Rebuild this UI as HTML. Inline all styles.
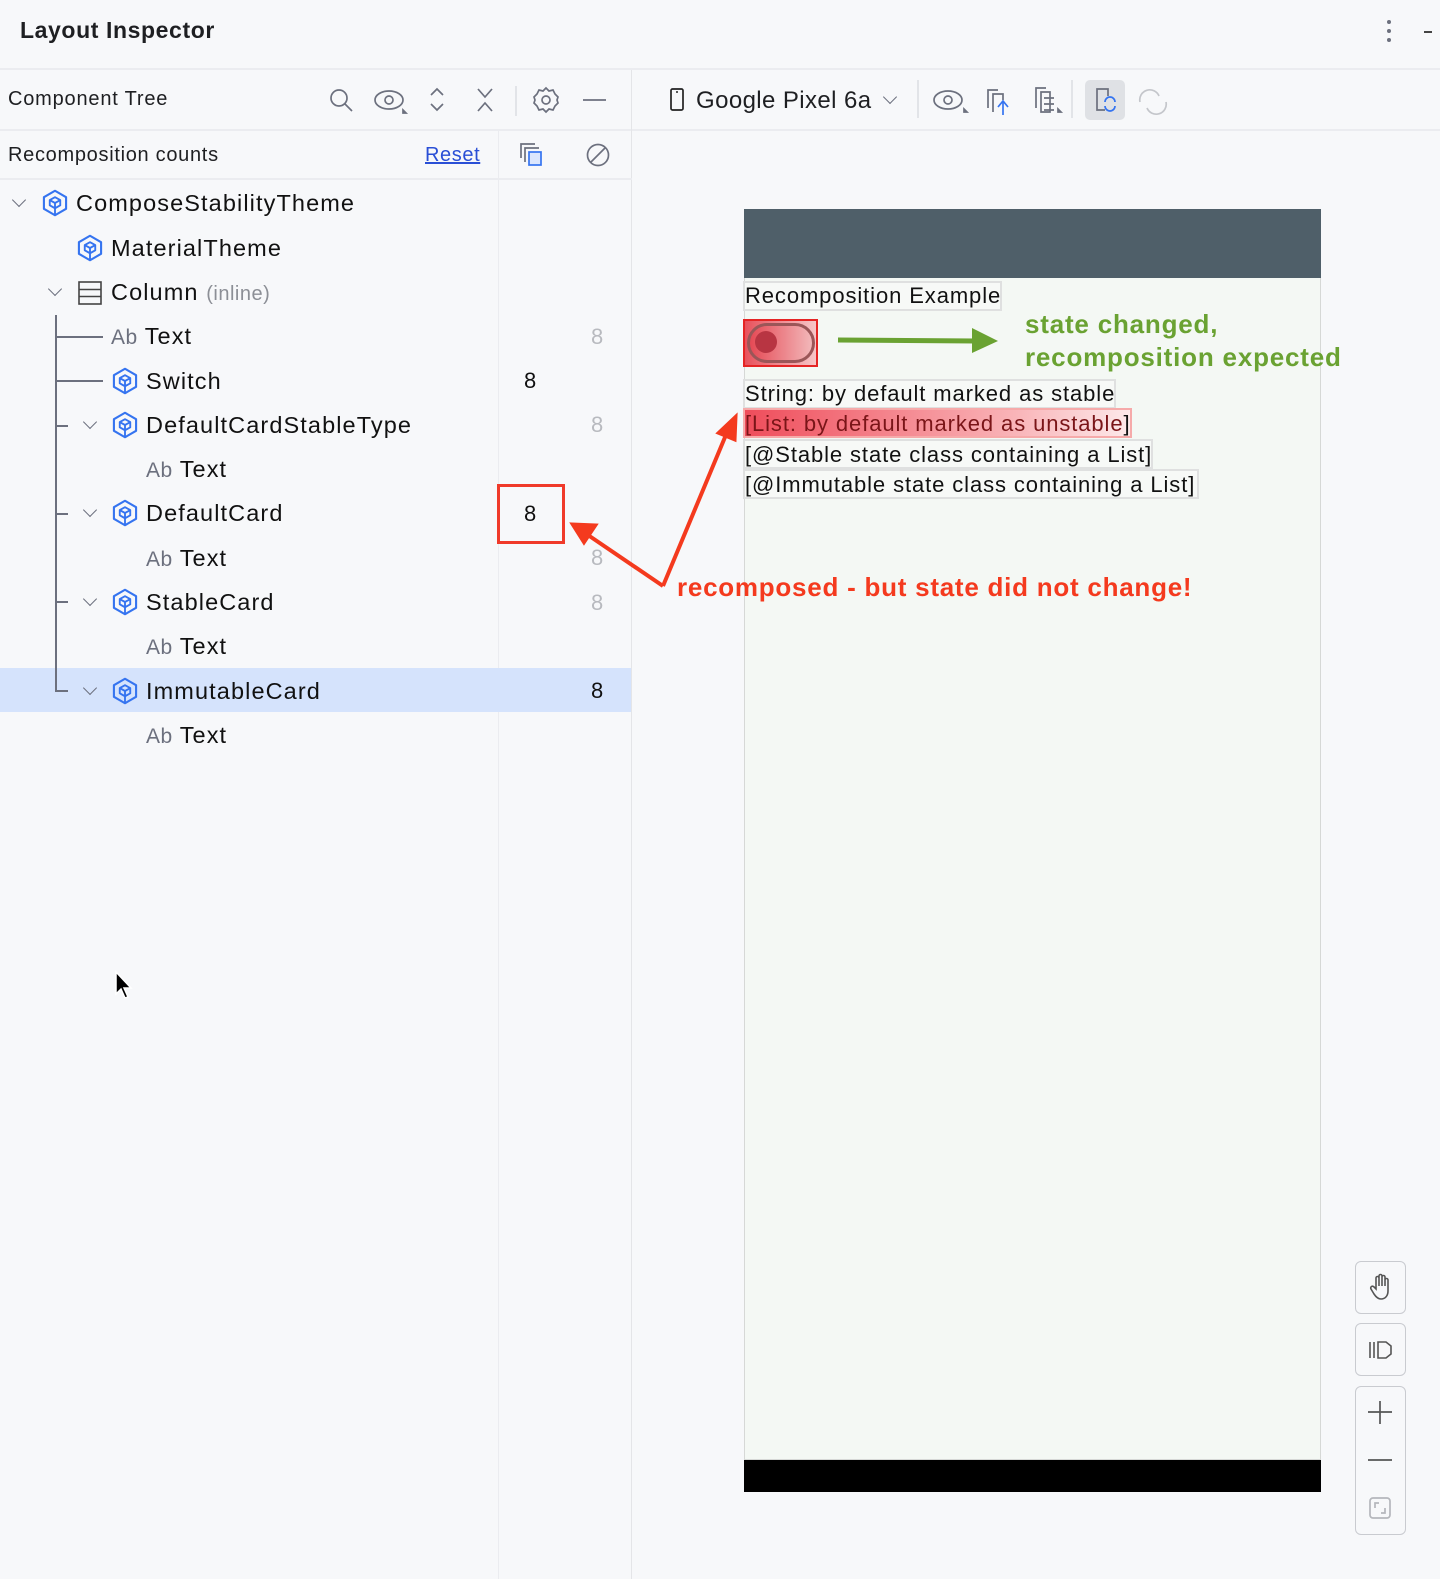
<!DOCTYPE html>
<html><head><meta charset="utf-8"><style>
*{margin:0;padding:0;box-sizing:border-box}
body{width:1440px;height:1579px;background:#f7f8fa;font-family:"Liberation Sans",sans-serif;position:relative;overflow:hidden;color:#111}
.a{position:absolute;white-space:nowrap}
.hl{position:absolute;height:2px;background:#ebecf0}
.vl{position:absolute;width:1px;background:#ebecf0}
.t{font-size:23.5px;line-height:30px;letter-spacing:1.1px}
.ab{color:#6c707e;font-size:21px;margin-right:7px;letter-spacing:0.5px}
.c8{position:absolute;font-size:22px;color:#b8babf}
.tree{position:absolute;background:#6c707e}
.chev{position:absolute;width:10px;height:10px;border-right:1.6px solid #6c707e;border-bottom:1.6px solid #6c707e;transform:rotate(45deg)}
.dev{font-size:22px;line-height:28px;letter-spacing:0.9px}
.box{position:absolute;border:2px solid #dfe0e0;background:#f7f9f7}
.btn{position:absolute;left:1355px;width:51px;border:1.5px solid #c9cbd0;border-radius:6px;background:#f7f8fa}
</style></head><body>
<svg width="0" height="0" style="position:absolute"><defs>
<symbol id="cube" viewBox="0 0 24 24"><path d="M12 1.5 L21.5 7 L21.5 17 L12 22.5 L2.5 17 L2.5 7 Z" fill="none" stroke="#3574f0" stroke-width="1.8" stroke-linejoin="round"/><path d="M7.5 9.5 L12 7 L16.5 9.5 L16.5 14 L12 16.5 L7.5 14 Z M7.5 9.5 L12 12 L16.5 9.5 M12 12 L12 22" fill="none" stroke="#3574f0" stroke-width="1.6" stroke-linejoin="round"/></symbol>
</defs></svg>

<!-- title -->
<div class="a" style="left:20px;top:17px;font-size:23px;font-weight:bold;color:#1e1f22;letter-spacing:0.6px">Layout Inspector</div>
<div class="a" style="left:1387px;top:20px;width:4px;height:4px;border-radius:2px;background:#6c707e;box-shadow:0 9px 0 #6c707e,0 18px 0 #6c707e"></div>
<div class="a" style="left:1424px;top:31px;width:8px;height:1.5px;background:#444"></div>
<div class="hl" style="left:0;top:68px;width:1440px"></div>

<!-- left toolbar -->
<div class="a" style="left:8px;top:88px;font-size:20px;color:#1e1f22;letter-spacing:0.8px">Component Tree</div>
<svg class="a" style="left:326px;top:86px" width="300" height="30" fill="none" stroke="#6c707e" stroke-width="1.7">
<circle cx="13" cy="12" r="8"/><path d="M19 18 L26 25"/>
<ellipse cx="63" cy="14" rx="14" ry="9"/><circle cx="63" cy="14" r="4"/><path d="M77 24 L80 27 L77 27Z" fill="#6c707e"/>
<path d="M105 9 L111 3 L117 9 M105 18 L111 24 L117 18"/>
<path d="M152 3 L159 11 L166 3 M152 25 L159 17 L166 25"/>
<path d="M190 -4 L190 32" stroke="#dfe1e5"/>
<circle cx="220" cy="14" r="4"/><path d="M220 2 L223 5 L227 4 L229 8 L232 11 L231 14 L232 17 L229 20 L227 24 L223 23 L220 26 L217 23 L213 24 L211 20 L208 17 L209 14 L208 11 L211 8 L213 4 L217 5 Z"/>
<path d="M257 14 L280 14"/>
</svg>
<div class="hl" style="left:0;top:129px;width:1440px"></div>
<div class="vl" style="left:631px;top:70px;height:1509px;background:#e4e5e8"></div>

<!-- recomposition row -->
<div class="a" style="left:8px;top:144px;font-size:20px;color:#1e1f22;letter-spacing:0.7px">Recomposition counts</div>
<div class="a" style="left:425px;top:144px;font-size:20px;color:#2a4fd6;text-decoration:underline;letter-spacing:0.6px">Reset</div>
<svg class="a" style="left:518px;top:141px" width="100" height="30" fill="none" stroke-width="1.7">
<path d="M3 17 L3 3 L17 3" stroke="#6c707e"/><path d="M7 21 L7 7 L21 7" stroke="#6c707e"/><rect x="11" y="11" width="12" height="13" fill="#dbe6fd" stroke="#3574f0"/>
<circle cx="80" cy="14" r="10.5" stroke="#6c707e"/><path d="M73 21 L87 7" stroke="#6c707e"/>
</svg>
<div class="hl" style="left:0;top:178px;width:632px"></div>
<div class="vl" style="left:498px;top:130px;height:1449px"></div>

<!-- selected row -->
<div class="a" style="left:0;top:668px;width:631px;height:44px;background:#d5e3fc"></div>

<!-- tree lines -->
<div class="tree" style="left:55px;top:315px;width:1.5px;height:375px"></div>
<div class="tree" style="left:55px;top:336px;width:48px;height:1.5px"></div>
<div class="tree" style="left:55px;top:380px;width:48px;height:1.5px"></div>
<div class="tree" style="left:55px;top:425px;width:13px;height:1.5px"></div>
<div class="tree" style="left:55px;top:513px;width:13px;height:1.5px"></div>
<div class="tree" style="left:55px;top:601px;width:13px;height:1.5px"></div>
<div class="tree" style="left:55px;top:690px;width:13px;height:1.5px"></div>

<div class="chev" style="left:14px;top:195px"></div>
<div class="chev" style="left:50px;top:284px"></div>
<div class="chev" style="left:85px;top:417px"></div>
<div class="chev" style="left:85px;top:505px"></div>
<div class="chev" style="left:85px;top:594px"></div>
<div class="chev" style="left:85px;top:683px"></div>

<svg class="a" style="left:41px;top:189px" width="28" height="28"><use href="#cube"/></svg>
<div class="a t" style="left:76px;top:188px">ComposeStabilityTheme</div>
<svg class="a" style="left:76px;top:234px" width="28" height="28"><use href="#cube"/></svg>
<div class="a t" style="left:111px;top:233px">MaterialTheme</div>
<svg class="a" style="left:77px;top:280px" width="26" height="26"><rect x="2" y="2" width="22" height="22" fill="none" stroke="#444" stroke-width="1.6"/><path d="M2 9.5 H24 M2 16.5 H24" stroke="#444" stroke-width="1.6"/></svg>
<div class="a t" style="left:111px;top:277px">Column <span style="color:#8c8f96;font-size:20px;letter-spacing:0.5px">(inline)</span></div>
<div class="a t" style="left:111px;top:321px"><span class="ab">Ab</span>Text</div>
<svg class="a" style="left:111px;top:367px" width="28" height="28"><use href="#cube"/></svg>
<div class="a t" style="left:146px;top:366px">Switch</div>
<svg class="a" style="left:111px;top:411px" width="28" height="28"><use href="#cube"/></svg>
<div class="a t" style="left:146px;top:410px">DefaultCardStableType</div>
<div class="a t" style="left:146px;top:454px"><span class="ab">Ab</span>Text</div>
<svg class="a" style="left:111px;top:499px" width="28" height="28"><use href="#cube"/></svg>
<div class="a t" style="left:146px;top:498px">DefaultCard</div>
<div class="a t" style="left:146px;top:543px"><span class="ab">Ab</span>Text</div>
<svg class="a" style="left:111px;top:588px" width="28" height="28"><use href="#cube"/></svg>
<div class="a t" style="left:146px;top:587px">StableCard</div>
<div class="a t" style="left:146px;top:631px"><span class="ab">Ab</span>Text</div>
<svg class="a" style="left:111px;top:677px" width="28" height="28"><use href="#cube"/></svg>
<div class="a t" style="left:146px;top:676px">ImmutableCard</div>
<div class="a t" style="left:146px;top:720px"><span class="ab">Ab</span>Text</div>

<!-- counts -->
<div class="c8" style="left:591px;top:324px">8</div>
<div class="c8" style="left:524px;top:368px;color:#111">8</div>
<div class="c8" style="left:591px;top:412px">8</div>
<div class="c8" style="left:524px;top:501px;color:#111">8</div>
<div class="c8" style="left:591px;top:545px">8</div>
<div class="c8" style="left:591px;top:590px">8</div>
<div class="c8" style="left:591px;top:678px;color:#111">8</div>
<div class="a" style="left:497px;top:484px;width:68px;height:60px;border:3px solid #f03a2a"></div>

<!-- cursor -->
<svg class="a" style="left:114px;top:970px" width="24" height="34"><path d="M2 2 L2 24 L7 19 L11 28 L14 27 L10 18 L17 18 Z" fill="#000" stroke="#fff" stroke-width="1.5"/></svg>

<!-- right toolbar -->
<svg class="a" style="left:668px;top:87px" width="20" height="26"><rect x="3" y="2" width="12" height="21" rx="1.5" fill="none" stroke="#222" stroke-width="1.7"/><path d="M8 5 H10" stroke="#222" stroke-width="1.5"/></svg>
<div class="a" style="left:696px;top:87px;font-size:24px;color:#1e1f22;letter-spacing:0.4px">Google Pixel 6a</div>
<div class="chev" style="left:885px;top:92px"></div>
<svg class="a" style="left:915px;top:80px" width="260" height="42" fill="none" stroke="#6c707e" stroke-width="1.7">
<path d="M3 0 V38" stroke="#dfe1e5"/>
<ellipse cx="33" cy="20" rx="14" ry="9"/><circle cx="33" cy="20" r="4"/><path d="M49 29 L52 32 L49 32Z" fill="#6c707e"/>
<path d="M73 28 V10 H83 M78 32 V14 H88 V20"/><path d="M88 35 V22 M83 27 L88 21 L93 27" stroke="#3574f0"/>
<path d="M121 28 V8 H131 M126 32 V12 H135 V32 Z M129 18 H139 M129 24 H139 M129 30 H139"/><path d="M143 29 L146 32 L143 32Z" fill="#6c707e"/>
<path d="M157 0 V38" stroke="#dfe1e5"/>
<rect x="170" y="0" width="40" height="40" rx="5" fill="#dfe1e5" stroke="none"/>
<path d="M190 30 H182 V9 H193 V16"/><path d="M190 22 A5 5 0 0 1 200 22 M200 26 A5 5 0 0 1 190 26" stroke="#3574f0"/>
<path d="M225 22 A10 10 0 0 1 244 16 M251 22 A10 10 0 0 1 232 28" stroke="#c4c6cb"/>
</svg>

<!-- device -->
<div class="a" style="left:744px;top:209px;width:577px;height:69px;background:#4f5f69"></div>
<div class="a" style="left:744px;top:278px;width:577px;height:1182px;background:#f4f8f4;border:1.5px solid #d6d8d6;border-top:none"></div>
<div class="a" style="left:744px;top:1460px;width:577px;height:32px;background:#000"></div>
<div class="box" style="left:743px;top:281px;width:259px;height:30px"></div>
<div class="a dev" style="left:745px;top:282px">Recomposition Example</div>
<div class="a" style="left:743px;top:319px;width:75px;height:48px;border:2px solid #e52424;background:linear-gradient(90deg,#e8525c,#f7c6c8)"></div>
<div class="a" style="left:747px;top:323px;width:68px;height:40px;border-radius:20px;border:3px solid #9b5658;background:linear-gradient(90deg,#e54a55,#f2b7b9)"></div>
<div class="a" style="left:755px;top:331px;width:22px;height:22px;border-radius:11px;background:#b83542"></div>
<div class="box" style="left:743px;top:379px;width:373px;height:30px"></div>
<div class="a dev" style="left:745px;top:380px">String: by default marked as stable</div>
<div class="a" style="left:743px;top:408px;width:389px;height:30px;border:2px solid #f6aaaa;background:linear-gradient(90deg,#ef4d5b,#f9b4b8 70%,#fde9ea)"></div>
<div class="a dev" style="left:745px;top:410px;color:#7a1518">[List: by default marked as unstable<span style="color:#111">]</span></div>
<div class="box" style="left:743px;top:439px;width:410px;height:30px"></div>
<div class="a dev" style="left:745px;top:441px">[@Stable state class containing a List]</div>
<div class="box" style="left:743px;top:469px;width:456px;height:30px"></div>
<div class="a dev" style="left:745px;top:471px">[@Immutable state class containing a List]</div>

<!-- annotations -->
<svg class="a" style="left:560px;top:300px" width="460" height="300">
<path d="M278 40 L415 41" stroke="#6aa232" stroke-width="5"/><path d="M412 28 L438 41 L412 53Z" fill="#6aa232"/>
<path d="M103 286 L168 130" stroke="#f43a1e" stroke-width="4"/><path d="M176 116 L158 133 L175 140Z" fill="#f43a1e" stroke="#f43a1e" stroke-width="3"/>
<path d="M103 286 L25 233" stroke="#f43a1e" stroke-width="4"/><path d="M12 224 L36 225 L24 243Z" fill="#f43a1e" stroke="#f43a1e" stroke-width="3"/>
</svg>
<div class="a" style="left:1025px;top:308px;font-size:26px;font-weight:bold;color:#6aa232;line-height:33px;letter-spacing:0.8px">state changed,<br>recomposition expected</div>
<div class="a" style="left:677px;top:572px;font-size:26px;font-weight:bold;color:#f43a1e;letter-spacing:0.75px">recomposed - but state did not change!</div>

<!-- right buttons -->
<div class="btn" style="top:1261px;height:53px"></div>
<svg class="a" style="left:1368px;top:1273px" width="26" height="28" fill="none" stroke="#555" stroke-width="1.6"><path d="M8 16 V5 a1.5 1.5 0 0 1 3 0 V13 V3 a1.5 1.5 0 0 1 3 0 V13 V4 a1.5 1.5 0 0 1 3 0 V13 V7 a1.5 1.5 0 0 1 3 0 V18 c0 5 -3 8 -7 8 c-3 0 -5 -2 -7 -5 L3 16 a1.5 1.5 0 0 1 3 -2 Z"/></svg>
<div class="btn" style="top:1323px;height:53px"></div>
<svg class="a" style="left:1368px;top:1339px" width="26" height="22" fill="none" stroke="#555" stroke-width="1.6"><path d="M2 3 V19 M6 3 V19 M10 3 H18 L23 7 V15 L18 19 H10 Z"/></svg>
<div class="btn" style="top:1386px;height:149px"></div>
<svg class="a" style="left:1366px;top:1398px" width="30" height="126" fill="none" stroke="#555" stroke-width="1.7"><path d="M14 3 V26 M2 14 H26 M2 62 H26"/><rect x="4" y="100" width="20" height="20" rx="3" stroke="#b5b7bc"/><path d="M9 110 V105 H13 M19 110 V115 H15" stroke="#b5b7bc"/></svg>
</body></html>
